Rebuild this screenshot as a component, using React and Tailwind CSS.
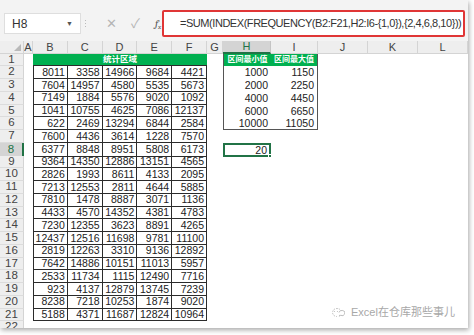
import React from 'react'

const DATA = [
  [8011, 3358, 14966, 9684, 4421],
  [7604, 14957, 4580, 5535, 5673],
  [7149, 1884, 5576, 9020, 1092],
  [1041, 10755, 4625, 7086, 12137],
  [622, 2469, 13294, 6844, 2584],
  [7600, 4436, 3614, 1228, 7570],
  [6377, 8848, 8951, 5808, 6173],
  [9364, 14350, 12886, 13151, 4565],
  [2826, 1993, 8611, 4133, 2095],
  [7213, 12553, 2811, 4644, 5885],
  [7810, 1478, 8887, 3071, 1136],
  [4433, 4570, 14352, 4381, 4783],
  [7230, 12355, 3623, 8891, 4265],
  [12437, 12516, 11698, 9781, 11100],
  [2819, 12263, 3310, 9136, 12892],
  [7642, 14886, 10151, 11013, 5957],
  [2533, 11734, 1115, 12490, 7716],
  [923, 4137, 12879, 13745, 7239],
  [8238, 7218, 10253, 1874, 9020],
  [5188, 4371, 11687, 12824, 10964],
]

const RANGES = [
  [1000, 1150],
  [2000, 2250],
  [4000, 4450],
  [6000, 6650],
  [10000, 11050],
]

const COLS = ['A', 'B', 'C', 'D', 'E', 'F', 'G', 'H', 'I', 'J', 'K', 'L']

const ROW = 'grid grid-cols-[24px_9px_repeat(5,34.8px)_16px_48px_47px_50px_50px_50px] h-[12.75px] shrink-0'

function RowHead({ n }) {
  const selected = n === 8
  return (
    <div
      className={
        selected
          ? 'bg-[#d4d4d4] border-r-2 border-r-[#217346] border-b border-b-[#c8c8c8] flex items-center justify-center text-[11.5px] text-[#217346] leading-none'
          : 'bg-[#eeeeee] border-r border-r-[#d4d4d4] border-b border-b-[#dcdcdc] flex items-center justify-center text-[11.5px] text-[#444] leading-none'
      }
    >
      {n}
    </div>
  )
}

function Num({ value, left }) {
  return (
    <div
      className={
        'border-r border-b border-[#2b2b2b] flex items-center justify-end pr-[2px] text-[10.5px] text-[#222] leading-none' +
        (left ? ' border-l' : '')
      }
    >
      {value}
    </div>
  )
}

function Sheet() {
  return (
    <div className="flex flex-col">
      {/* column headers */}
      <div className="grid grid-cols-[24px_9px_repeat(5,34.8px)_16px_48px_47px_50px_50px_50px] h-[12.6px] bg-[#eeeeee]">
        <div className="relative border-r border-b border-[#d4d4d4]">
          <div className="absolute right-[2px] bottom-[2px] w-0 h-0 border-l-[7px] border-l-transparent border-b-[7px] border-b-[#b9b9b9]" />
        </div>
        {COLS.map(c => (
          <div
            key={c}
            className={
              c === 'H'
                ? 'bg-[#d4d4d4] border-r border-r-[#c4c4c4] border-b-2 border-b-[#217346] flex items-center justify-center text-[11px] text-[#217346] leading-none'
                : 'border-r border-r-[#d4d4d4] border-b border-b-[#d4d4d4] flex items-center justify-center text-[11px] text-[#444] leading-none'
            }
          >
            {c}
          </div>
        ))}
      </div>

      {/* row 1 */}
      <div className={ROW}>
        <RowHead n={1} />
        <div />
        <div className="col-span-5 bg-[#00b050] border-b border-[#2b2b2b] flex items-center justify-center text-[8.5px] font-bold text-white leading-none">
          统计区域
        </div>
        <div />
        <div className="bg-[#00b050] border-l border-[#555] flex items-center justify-center text-[8px] font-bold text-white leading-none">
          区间最小值
        </div>
        <div className="bg-[#00b050] border-r border-[#555] flex items-center justify-center text-[8px] font-bold text-white leading-none">
          区间最大值
        </div>
        <div />
        <div />
        <div />
      </div>

      {DATA.map((vals, i) => {
        const n = i + 2
        const range = RANGES[i]
        return (
          <div key={n} className={ROW}>
            <RowHead n={n} />
            <div />
            {vals.map((v, j) => (
              <Num key={j} value={v} left={j === 0} />
            ))}
            <div />
            {range ? (
              <>
                <div className={'border-l border-[#555] flex items-center justify-end pr-[3px] text-[10.5px] text-[#222] leading-none' + (n === 6 ? ' border-b' : '')}>
                  {range[0]}
                </div>
                <div className={'border-r border-[#555] flex items-center justify-end pr-[3px] text-[10.5px] text-[#222] leading-none' + (n === 6 ? ' border-b' : '')}>
                  {range[1]}
                </div>
              </>
            ) : n === 8 ? (
              <>
                <div className="relative border-2 border-[#217346] flex items-center justify-end pr-[2px] text-[10.5px] text-[#222] leading-none">
                  20
                  <div className="absolute -right-[3px] -bottom-[3px] w-[4px] h-[4px] bg-[#217346] border border-white" />
                </div>
                <div />
              </>
            ) : (
              <>
                <div />
                <div />
              </>
            )}
            <div />
            <div />
            <div />
          </div>
        )
      })}

      {/* row 22, cut off */}
      <div className={ROW}>
        <RowHead n={22} />
      </div>
    </div>
  )
}

function Toolbar() {
  return (
    <div className="h-[41px] bg-[#f3f3f3] flex items-start pt-[10px]">
      <div className="ml-[4px] mt-[3px] w-[77px] h-[21px] bg-white border border-[#dedede] flex items-center justify-between pl-[7px] pr-[7px]">
        <span className="text-[12px] text-[#333] leading-none">H8</span>
        <span className="text-[7px] text-[#555] leading-none">▼</span>
      </div>
      <div className="ml-[4px] mt-[10px] flex flex-col gap-[2px]">
        <span className="w-[1px] h-[1px] bg-[#bbb]" />
        <span className="w-[1px] h-[1px] bg-[#bbb]" />
        <span className="w-[1px] h-[1px] bg-[#bbb]" />
      </div>
      <div className="ml-[6px] w-[70px] h-[27px] flex items-center">
        <span className="ml-[14px] text-[13px] text-[#b5b5b5] leading-none">✕</span>
        <span className="ml-[14px] text-[13px] text-[#b5b5b5] leading-none">✓</span>
        <span className="ml-[15px] text-[11px] italic text-[#555] leading-none font-serif">
          f<sub className="text-[7px]">x</sub>
        </span>
      </div>
      <div className="w-[303px] h-[27px] border-2 border-[#e03636] rounded-[2px] bg-white flex items-center pl-[16px]">
        <span className="text-[11px] tracking-[-0.45px] text-[#333] leading-none whitespace-nowrap">
          =SUM(INDEX(FREQUENCY(B2:F21,H2:I6-{'{'}1,0{'}'}),{'{'}2,4,6,8,10{'}'}))
        </span>
      </div>
    </div>
  )
}

function Watermark() {
  return (
    <div className="absolute left-[331px] top-[306px] flex items-center gap-[6px] text-[#a8a8a8]">
      <svg width="14" height="12" viewBox="0 0 14 12" fill="none" stroke="#bdbdbd" strokeWidth="1">
        <path d="M9 3.5A4.5 4 0 1 0 6 10.5" strokeDasharray="1.5 1" />
        <circle cx="3.5" cy="5.5" r="0.6" fill="#bdbdbd" stroke="none" />
        <circle cx="6.5" cy="5.5" r="0.6" fill="#bdbdbd" stroke="none" />
        <path d="M8 6.5a3 2.6 0 1 1 1.5 2.8l-1 1 0.2-1.4" />
      </svg>
      <span className="text-[11px] leading-none whitespace-nowrap">Excel在仓库那些事儿</span>
    </div>
  )
}

export default function App() {
  return (
    <div className="w-[474px] h-[335px] bg-white overflow-hidden font-['Liberation_Sans','Noto_Sans_CJK_SC',sans-serif]">
      <div className="relative w-[468px] h-[328px] bg-white overflow-hidden shadow-[1px_2px_5px_rgba(0,0,0,0.35)]">
        <Toolbar />
        <Sheet />
        <Watermark />
      </div>
    </div>
  )
}
